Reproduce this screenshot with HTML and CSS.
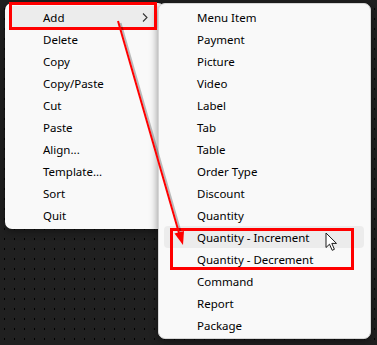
FILE: index.html
```html
<!DOCTYPE html>
<html>
<head>
<meta charset="utf-8">
<link rel="stylesheet" href="styles.css">
</head>
<body>
<div class="canvas">
  <div class="menu menu-main">
    <div class="item active"><span>Add</span>
      <svg class="chev" width="6" height="9" viewBox="0 0 6 9"><polyline points="1,0.5 5,4.5 1,8.5" fill="none" stroke="#333" stroke-width="1.1"/></svg>
    </div>
    <div class="item">Delete</div>
    <div class="item">Copy</div>
    <div class="item">Copy/Paste</div>
    <div class="item">Cut</div>
    <div class="item">Paste</div>
    <div class="item">Align...</div>
    <div class="item">Template...</div>
    <div class="item">Sort</div>
    <div class="item">Quit</div>
  </div>
  <div class="menu menu-sub">
    <div class="item">Menu Item</div>
    <div class="item">Payment</div>
    <div class="item">Picture</div>
    <div class="item">Video</div>
    <div class="item">Label</div>
    <div class="item">Tab</div>
    <div class="item">Table</div>
    <div class="item">Order Type</div>
    <div class="item">Discount</div>
    <div class="item">Quantity</div>
    <div class="item active">Quantity - Increment</div>
    <div class="item">Quantity - Decrement</div>
    <div class="item">Command</div>
    <div class="item">Report</div>
    <div class="item">Package</div>
  </div>
  <div class="mark mark-add"></div>
  <div class="mark mark-qty"></div>
  <svg class="arrow" width="377" height="345" viewBox="0 0 377 345">
    <line x1="119" y1="22" x2="180" y2="234" stroke="rgba(0,0,0,0.25)" stroke-width="2" transform="translate(1.5,1)"/>
    <line x1="118" y1="21" x2="179" y2="233" stroke="#ff0000" stroke-width="2"/>
    <polygon points="183,245 174.5,233.5 184,231" fill="#ff0000"/>
  </svg>
  <svg class="cursor" width="14" height="20" viewBox="0 0 14 20">
    <path d="M1 1 L1 15.5 L4.5 12.2 L7.2 18.3 L9.4 17.3 L6.8 11.4 L11.5 11.4 Z" fill="#fff" stroke="#1a1a1a" stroke-width="1" stroke-linejoin="round"/>
  </svg>
</div>
</body>
</html>
```
FILE: styles.css
```css
html, body {
  margin: 0;
  padding: 0;
}
body {
  width: 377px;
  height: 345px;
  overflow: hidden;
  background-color: #202020;
  font-family: "Noto Sans", "Open Sans", sans-serif;
}
.canvas {
  position: relative;
  width: 377px;
  height: 345px;
  background-color: #202020;
  background-image:
    linear-gradient(to bottom, #202020 0, #202020 8px, transparent 8px),
    linear-gradient(to right, transparent 4px, #000 4px, #000 5px, transparent 5px);
  background-size: 10px 10px, 10px 10px;
  background-position: 0 0, 0 0;
}
.menu {
  position: absolute;
  top: 3px;
  background: #f9f9f9;
  border-radius: 7px;
  box-shadow: 0 2px 8px rgba(0,0,0,0.45);
  padding: 3px 0;
  display: flex;
  flex-direction: column;
}
.menu-main {
  left: 5px;
  width: 160px;
}
.menu-sub {
  left: 158px;
  width: 213px;
  border: 1px solid #d6d6d6;
  box-sizing: border-box;
  padding: 2px 0;
}
.item {
  height: 22px;
  margin: 0 5px;
  padding-left: 33px;
  padding-right: 10px;
  border-radius: 4px;
  display: flex;
  align-items: center;
  justify-content: space-between;
  font-size: 11.5px;
  color: #000;
  white-space: nowrap;
}
.menu-main .item.active {
  padding-right: 12px;
}
.menu-sub .item {
  margin: 0 6px 0 5px;
}
.item.active {
  background: #ececec;
}
.mark {
  position: absolute;
  border: 3px solid #ff0000;
  box-sizing: border-box;
}
.mark-add {
  left: 9px;
  top: 2px;
  width: 148px;
  height: 28px;
}
.mark-qty {
  left: 170px;
  top: 228px;
  width: 184px;
  height: 42px;
}
.arrow {
  position: absolute;
  left: 0;
  top: 0;
  pointer-events: none;
}
.cursor {
  position: absolute;
  left: 325px;
  top: 232px;
}
```
